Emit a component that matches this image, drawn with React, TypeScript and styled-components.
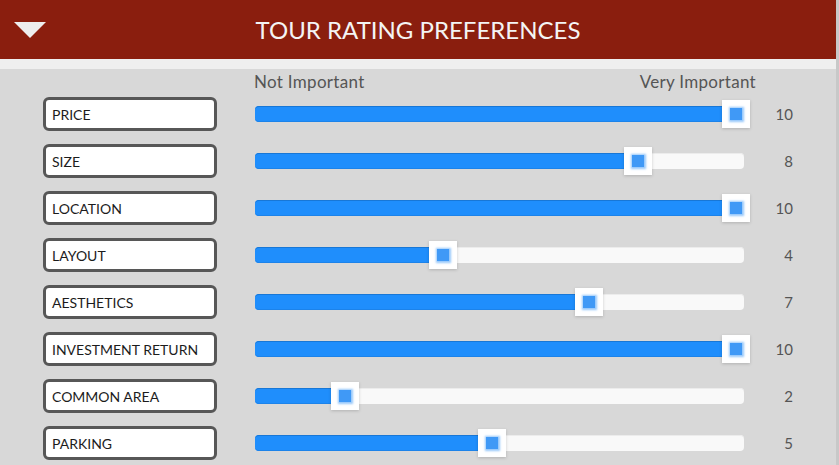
import React from 'react';
import styled, { createGlobalStyle } from 'styled-components';

const GlobalStyle = createGlobalStyle`
  html, body {
    margin: 0;
    padding: 0;
    background: #d8d8d8;
  }
  body {
    font-family: Lato, "Open Sans", sans-serif;
  }
`;

const preferences = [
  { name: 'PRICE', value: 10 },
  { name: 'SIZE', value: 8 },
  { name: 'LOCATION', value: 10 },
  { name: 'LAYOUT', value: 4 },
  { name: 'AESTHETICS', value: 7 },
  { name: 'INVESTMENT RETURN', value: 10 },
  { name: 'COMMON AREA', value: 2 },
  { name: 'PARKING', value: 5 },
];

const TRACK_WIDTH = 489;
const STEP = 48.9;

const App: React.FC = () => {
  return (
    <>
      <GlobalStyle />
      <Page>
        <Header>
          <Toggle>
            <svg width="32" height="16" viewBox="0 0 32 16">
              <polygon points="0,0 32,0 16,16" fill="#eeeeee" />
            </svg>
          </Toggle>
          <Title>TOUR RATING PREFERENCES</Title>
        </Header>
        <Divider />
        <Content>
          <Legend>
            <span>Not Important</span>
            <span>Very Important</span>
          </Legend>
          {preferences.map(({ name, value }) => {
            const center = -8 + value * STEP;
            const fill = Math.min(TRACK_WIDTH, center + 14);
            return (
              <Row key={name}>
                <LabelBox>{name}</LabelBox>
                <Track>
                  <Fill style={{ width: fill }} />
                  <Thumb style={{ left: center - 14 }}>
                    <ThumbDot />
                  </Thumb>
                </Track>
                <Value>{value}</Value>
              </Row>
            );
          })}
        </Content>
      </Page>
    </>
  );
};

const Page = styled.div`
  width: 836px;
  min-height: 465px;
  border-right: 3px solid #c8c8c8;
  background: #d8d8d8;
`;

const Header = styled.div`
  position: relative;
  height: 59px;
  background-color: #8a1e0e;
  display: flex;
  align-items: center;
  justify-content: center;
`;

const Toggle = styled.div`
  position: absolute;
  left: 14px;
  top: 22px;
  display: flex;
`;

const Title = styled.h1`
  margin: 0;
  font-size: 24px;
  font-weight: 400;
  color: #f4f4f4;
`;

const Divider = styled.div`
  height: 10px;
  background: #efefef;
`;

const Content = styled.div`
  display: flex;
  flex-direction: column;
  gap: 13px;
  padding-bottom: 12px;
`;

const Legend = styled.div`
  display: flex;
  justify-content: space-between;
  width: 502px;
  margin-left: 254px;
  margin-top: 3px;
  margin-bottom: -8px;
  font-size: 17px;
  letter-spacing: 0.3px;
  color: #555555;
  line-height: 20px;
`;

const Row = styled.div`
  display: flex;
  align-items: center;
  gap: 38px;
  padding-left: 43px;
  height: 34px;
`;

const LabelBox = styled.div`
  box-sizing: border-box;
  flex: 0 0 174px;
  height: 34px;
  display: flex;
  align-items: center;
  padding-left: 6px;
  border: 3px solid #575757;
  border-radius: 6px;
  background: #ffffff;
  font-size: 14px;
  color: #1c1c1c;
  white-space: nowrap;
`;

const Track = styled.div`
  position: relative;
  flex: 0 0 489px;
  height: 16px;
  border-radius: 4px;
  background: #f9f9f9;
  box-shadow: inset 0 1px 0 #ececec;
`;

const Fill = styled.div`
  height: 100%;
  border-radius: 4px;
  background: #1f8efc;
  box-shadow: inset 0 1px 0 #1877d6, inset 0 -1px 0 #1c83ea;
`;

const Thumb = styled.div`
  position: absolute;
  top: -6px;
  width: 28px;
  height: 28px;
  background: #ffffff;
  box-shadow: 0 1px 3px rgba(0, 0, 0, 0.18);
  display: flex;
  align-items: center;
  justify-content: center;
`;

const ThumbDot = styled.div`
  width: 12px;
  height: 12px;
  background: #4099f6;
  box-shadow: 0 0 2px 1.5px rgba(64, 153, 246, 0.55);
`;

const Value = styled.div`
  flex: 0 0 49px;
  margin-left: -38px;
  text-align: right;
  font-size: 15px;
  color: #555555;
`;

export default App;
